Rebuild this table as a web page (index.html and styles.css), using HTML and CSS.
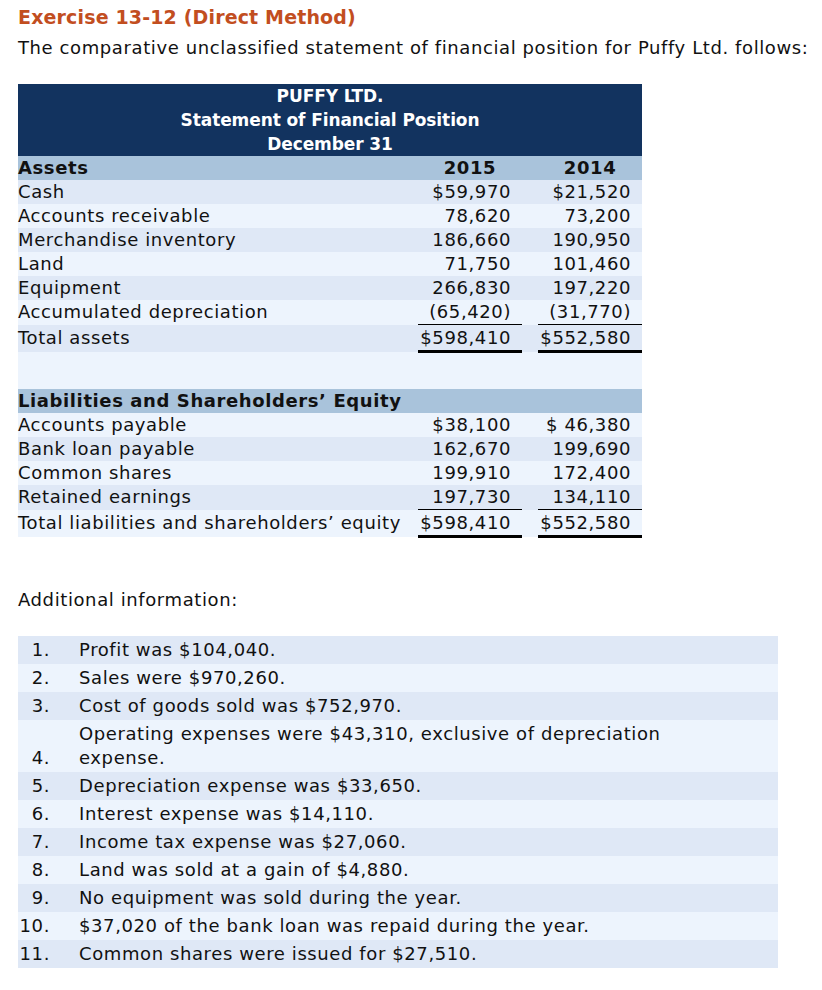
FILE: index.html
```html
<!DOCTYPE html>
<html>
<head>
<meta charset="utf-8">
<link rel="stylesheet" href="styles.css">
</head>
<body>
<div class="page">
  <h1 class="title">Exercise 13-12 (Direct Method)</h1>
  <p class="intro">The comparative unclassified statement of financial position for Puffy Ltd. follows:</p>

  <table class="sfp">
    <colgroup>
      <col class="c-label"><col class="c-num"><col class="c-gap"><col class="c-num">
    </colgroup>
    <thead>
      <tr><th colspan="4" class="banner">PUFFY LTD.<br>Statement of Financial Position<br>December 31</th></tr>
    </thead>
    <tbody>
      <tr class="head"><td>Assets</td><td class="yr">2015</td><td></td><td class="yr">2014</td></tr>
      <tr class="dk"><td>Cash</td><td class="n">$59,970</td><td></td><td class="n">$21,520</td></tr>
      <tr class="lt"><td>Accounts receivable</td><td class="n">78,620</td><td></td><td class="n">73,200</td></tr>
      <tr class="dk"><td>Merchandise inventory</td><td class="n">186,660</td><td></td><td class="n">190,950</td></tr>
      <tr class="lt"><td>Land</td><td class="n">71,750</td><td></td><td class="n">101,460</td></tr>
      <tr class="dk"><td>Equipment</td><td class="n">266,830</td><td></td><td class="n">197,220</td></tr>
      <tr class="lt"><td>Accumulated depreciation</td><td class="n ul">(65,420)</td><td></td><td class="n ul">(31,770)</td></tr>
      <tr class="dk tot"><td>Total assets</td><td class="n dul">$598,410</td><td></td><td class="n dul">$552,580</td></tr>
      <tr class="lt empty"><td></td><td></td><td></td><td></td></tr>
      <tr class="head"><td>Liabilities and Shareholders’ Equity</td><td></td><td></td><td></td></tr>
      <tr class="lt"><td>Accounts payable</td><td class="n">$38,100</td><td></td><td class="n">$ 46,380</td></tr>
      <tr class="dk"><td>Bank loan payable</td><td class="n">162,670</td><td></td><td class="n">199,690</td></tr>
      <tr class="lt"><td>Common shares</td><td class="n">199,910</td><td></td><td class="n">172,400</td></tr>
      <tr class="dk"><td>Retained earnings</td><td class="n ul">197,730</td><td></td><td class="n ul">134,110</td></tr>
      <tr class="lt tot"><td>Total liabilities and shareholders’ equity</td><td class="n dul">$598,410</td><td></td><td class="n dul">$552,580</td></tr>
    </tbody>
  </table>

  <p class="addl">Additional information:</p>

  <table class="info">
    <tr class="dk"><td class="num">1.</td><td class="txt">Profit was $104,040.</td></tr>
    <tr class="lt"><td class="num">2.</td><td class="txt">Sales were $970,260.</td></tr>
    <tr class="dk"><td class="num">3.</td><td class="txt">Cost of goods sold was $752,970.</td></tr>
    <tr class="lt"><td class="num">4.</td><td class="txt">Operating expenses were $43,310, exclusive of depreciation<br>expense.</td></tr>
    <tr class="dk"><td class="num">5.</td><td class="txt">Depreciation expense was $33,650.</td></tr>
    <tr class="lt"><td class="num">6.</td><td class="txt">Interest expense was $14,110.</td></tr>
    <tr class="dk"><td class="num">7.</td><td class="txt">Income tax expense was $27,060.</td></tr>
    <tr class="lt"><td class="num">8.</td><td class="txt">Land was sold at a gain of $4,880.</td></tr>
    <tr class="dk"><td class="num">9.</td><td class="txt">No equipment was sold during the year.</td></tr>
    <tr class="lt"><td class="num">10.</td><td class="txt">$37,020 of the bank loan was repaid during the year.</td></tr>
    <tr class="dk"><td class="num">11.</td><td class="txt">Common shares were issued for $27,510.</td></tr>
  </table>
</div>
</body>
</html>
```

FILE: styles.css
```css
html, body {
  margin: 0;
  padding: 0;
  background: #ffffff;
}
body {
  font-family: "DejaVu Sans", Verdana, sans-serif;
  font-size: 18px;
  letter-spacing: 0.6px;
  color: #111111;
}
.page {
  padding: 0 0 0 18px;
}
.title {
  margin: 5px 0 0 0;
  font-size: 19px;
  letter-spacing: 0.15px;
  font-weight: bold;
  color: #c24e1f;
  line-height: 24px;
}
.intro {
  margin: 7px 0 0 0;
  line-height: 24px;
}
.sfp {
  margin-top: 24px;
  border-collapse: collapse;
  width: 624px;
  table-layout: fixed;
}
.c-label { width: 400px; }
.c-num { width: 104px; }
.c-gap { width: 16px; }
.sfp td, .sfp th {
  padding: 0;
  height: 24px;
  line-height: 24px;
  white-space: nowrap;
}
.banner {
  background: #12335f;
  color: #ffffff;
  font-weight: bold;
  font-size: 17px;
  letter-spacing: -0.1px;
  line-height: 24px;
  text-align: center;
}
.head td {
  background: #a9c3db;
  font-weight: bold;
}
.dk td { background: #dfe8f6; }
.lt td { background: #edf4fd; }
.yr { text-align: center; }
.n {
  text-align: right;
  padding-right: 11px !important;
}
.ul { border-bottom: 1px solid #000; }
.tot td { height: 25px; }
.dul { border-bottom: 3px solid #000; }
.empty td { height: 36px; }
.addl {
  margin: 50px 0 0 0;
  line-height: 24px;
}
.info {
  margin-top: 24px;
  border-collapse: collapse;
  width: 760px;
}
.info td {
  padding: 2px 0;
  line-height: 24px;
}
.info .num {
  width: 32px;
  text-align: right;
  vertical-align: bottom;
}
.info .txt {
  padding-left: 29px;
}
```
